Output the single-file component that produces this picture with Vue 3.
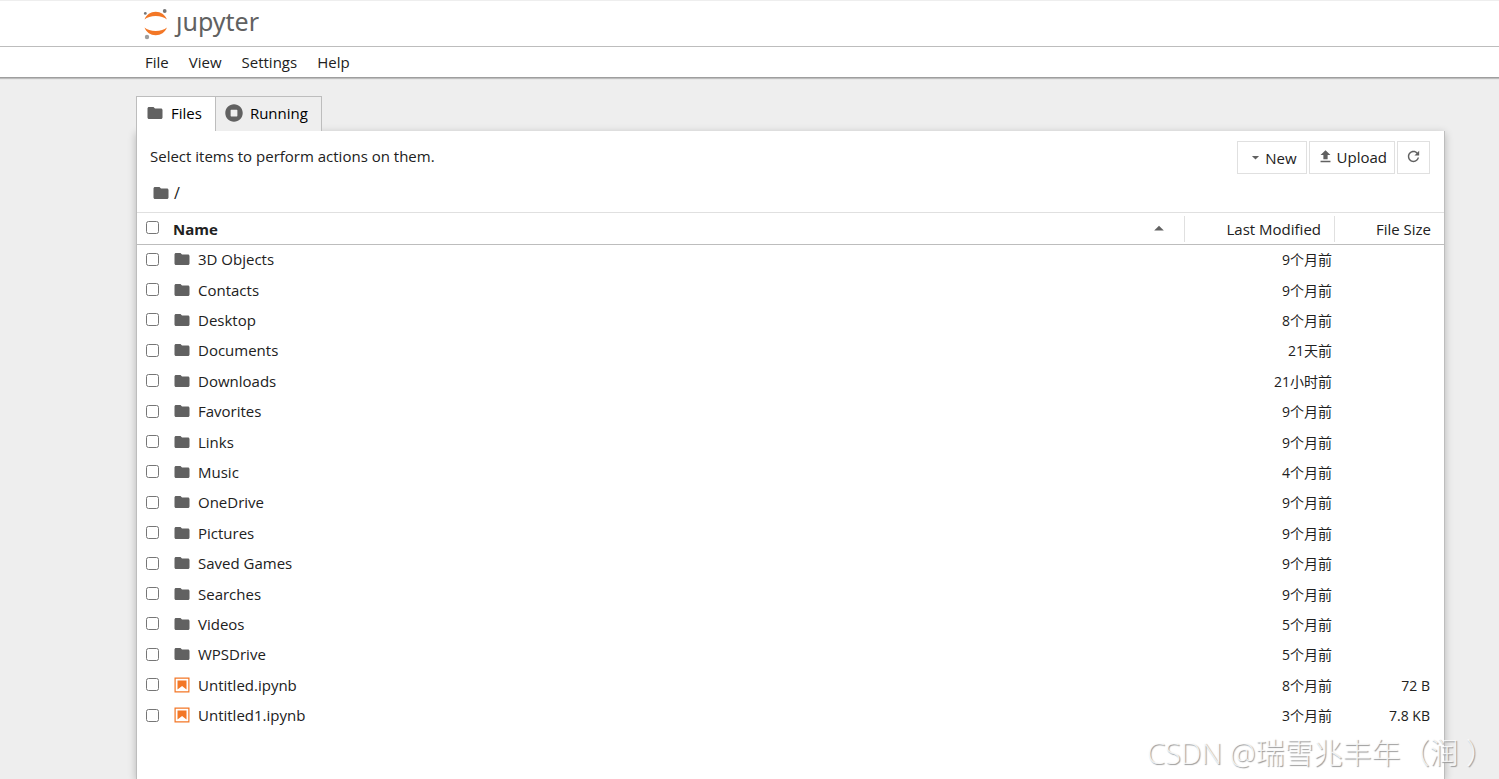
<script setup>
import { ref, computed } from 'vue'

const menus = ['File', 'View', 'Settings', 'Help']

const items = [
  { name: '3D Objects', modified: '9个月前' },
  { name: 'Contacts', modified: '9个月前' },
  { name: 'Desktop', modified: '8个月前' },
  { name: 'Documents', modified: '21天前' },
  { name: 'Downloads', modified: '21小时前' },
  { name: 'Favorites', modified: '9个月前' },
  { name: 'Links', modified: '9个月前' },
  { name: 'Music', modified: '4个月前' },
  { name: 'OneDrive', modified: '9个月前' },
  { name: 'Pictures', modified: '9个月前' },
  { name: 'Saved Games', modified: '9个月前' },
  { name: 'Searches', modified: '9个月前' },
  { name: 'Videos', modified: '5个月前' },
  { name: 'WPSDrive', modified: '5个月前' },
  { name: 'Untitled.ipynb', modified: '8个月前', size: '72 B', notebook: true },
  { name: 'Untitled1.ipynb', modified: '3个月前', size: '7.8 KB', notebook: true },
]

const tab = ref('files')
const selected = ref([])
const allSelected = computed({
  get: () => selected.value.length === items.length,
  set: (on) => { selected.value = on ? items.map((i) => i.name) : [] },
})
</script>

<template>
  <div class="page">
    <header class="top">
      <a class="logo" href="#" aria-label="jupyter">
        <svg class="logo-mark" viewBox="0 0 26 32" aria-hidden="true">
          <path d="M1.500 11.500C3.300 6.700 7.600 3.800 12.700 3.800S22.100 6.700 23.900 11.500C21.400 9.200 17.300 8 12.700 8S4 9.200 1.500 11.500Z" fill="#f37726" />
          <path d="M1.500 19.500C3.300 24.300 7.600 27.200 12.700 27.200S22.100 24.300 23.900 19.500C21.400 21.800 17.300 23 12.700 23S4 21.800 1.500 19.500Z" fill="#f37726" />
          <circle cx="21.700" cy="3" r="1.900" fill="#767677" />
          <circle cx="2.300" cy="5.400" r="1.400" fill="#767677" />
          <circle cx="4" cy="29" r="2.200" fill="#9e9e9e" />
        </svg>
        <span class="logo-text">ȷupyter</span>
      </a>
    </header>

    <nav class="menubar">
      <button v-for="m in menus" :key="m" class="menu" type="button">{{ m }}</button>
    </nav>

    <main class="main">
      <div class="tabs" role="tablist">
        <button class="tab" :class="{ current: tab === 'files' }" type="button" role="tab" :aria-selected="tab === 'files'" @click="tab = 'files'">
          <svg class="icon" viewBox="0 0 24 24"><path d="M10 4H4c-1.100 0-1.990.9-1.990 2L2 18c0 1.100.9 2 2 2h16c1.100 0 2-.9 2-2V8c0-1.100-.9-2-2-2h-8l-2-2z" /></svg>
          Files
        </button>
        <button class="tab" :class="{ current: tab === 'running' }" type="button" role="tab" :aria-selected="tab === 'running'" @click="tab = 'running'">
          <svg class="icon" viewBox="0 0 512 512"><path d="M256 8C119 8 8 119 8 256s111 248 248 248 248-111 248-248S393 8 256 8zm96 328c0 8.800-7.200 16-16 16H176c-8.800 0-16-7.200-16-16V176c0-8.800 7.200-16 16-16h160c8.800 0 16 7.200 16 16v160z" /></svg>
          Running
        </button>
      </div>

      <section class="panel">
        <div class="toolbar">
          <span class="hint">Select items to perform actions on them.</span>
          <button class="tool new" type="button">
            <svg class="icon" viewBox="0 0 18 18"><path d="M5.200 7.400L9 11.200l3.800-3.800z" /></svg>
            New
          </button>
          <button class="tool" type="button">
            <svg class="icon" viewBox="0 0 24 24"><path d="M9 16h6v-6h4l-7-7-7 7h4zm-4 2h14v2H5z" /></svg>
            Upload
          </button>
          <button class="tool" type="button" aria-label="Refresh">
            <svg class="icon" viewBox="0 0 18 18"><path d="M9 13.500c-2.490 0-4.500-2.010-4.500-4.500S6.510 4.500 9 4.500c1.240 0 2.360.52 3.170 1.330L10 8h5V3l-1.760 1.760C12.150 3.680 10.660 3 9 3 5.690 3 3.010 5.690 3.010 9S5.690 15 9 15c2.970 0 5.430-2.160 5.900-5h-1.520c-.46 2-2.240 3.500-4.380 3.500z" /></svg>
          </button>
        </div>

        <div class="crumbs">
          <svg class="icon" viewBox="0 0 24 24"><path d="M10 4H4c-1.100 0-1.990.9-1.990 2L2 18c0 1.100.9 2 2 2h16c1.100 0 2-.9 2-2V8c0-1.100-.9-2-2-2h-8l-2-2z" /></svg>
          <a href="#">/</a>
        </div>

        <table class="listing">
          <colgroup>
            <col class="col-check" />
            <col />
            <col class="col-modified" />
            <col class="col-size" />
          </colgroup>
          <thead>
            <tr>
              <th><input v-model="allSelected" class="check" type="checkbox" aria-label="Select all" /></th>
              <th class="name-head">
                <div class="head-cell">
                  Name
                  <svg class="icon" viewBox="0 0 18 18"><path d="M4.200 10.500L9 5.700l4.800 4.800z" /></svg>
                </div>
              </th>
              <th><div class="head-cell divided">Last Modified</div></th>
              <th><div class="head-cell divided">File Size</div></th>
            </tr>
          </thead>
          <tbody>
            <tr v-for="item in items" :key="item.name">
              <td><input v-model="selected" class="check" type="checkbox" :value="item.name" :aria-label="item.name" /></td>
              <td>
                <div class="item">
                  <svg v-if="item.notebook" class="icon notebook" viewBox="0 0 22 22"><path d="M18.700 3.300v15.400H3.300V3.300h15.400m1.500-1.500H1.800v18.300h18.300l.1-18.300z" /><path d="M16.500 16.500l-5.400-4.300-5.600 4.300v-11h11z" /></svg>
                  <svg v-else class="icon" viewBox="0 0 24 24"><path d="M10 4H4c-1.100 0-1.990.9-1.990 2L2 18c0 1.100.9 2 2 2h16c1.100 0 2-.9 2-2V8c0-1.100-.9-2-2-2h-8l-2-2z" /></svg>
                  {{ item.name }}
                </div>
              </td>
              <td class="modified">{{ item.modified }}</td>
              <td class="size">{{ item.size }}</td>
            </tr>
          </tbody>
        </table>
      </section>
    </main>

    <div class="watermark">CSDN @瑞雪兆丰年（润 ）</div>
  </div>
</template>

<style>
body {
  background: #eee;
}
</style>

<style scoped>
.page {
  position: relative;
  display: flex;
  flex-direction: column;
  min-height: 100vh;
  overflow: hidden;
  font-family: 'Open Sans', 'Noto Sans CJK SC', sans-serif;
  font-size: 15px;
  line-height: 20px;
  color: #212121;
}
button {
  font: inherit;
  color: inherit;
  cursor: pointer;
}
.icon {
  flex: none;
  width: 18px;
  height: 18px;
  fill: #616161;
}

.top {
  display: flex;
  box-sizing: border-box;
  height: 47px;
  padding: 0 143px;
  border-top: 1px solid #eee;
  border-bottom: 1px solid #bdbdbd;
  background: #fff;
}
.logo {
  display: flex;
  align-items: center;
  gap: 7px;
  color: #616161;
  text-decoration: none;
}
.logo-mark {
  width: 26px;
  height: 32px;
}
.logo-text {
  padding-bottom: 6px;
  font-family: 'Noto Sans', sans-serif;
  font-size: 25px;
  line-height: 32px;
}

.menubar {
  position: relative;
  display: flex;
  height: 30px;
  padding: 0 135px;
  border-bottom: 1px solid #9e9e9e;
  background: #fff;
  box-shadow: 0 1px 1px #bdbdbd;
}
.menu {
  padding: 0 10px;
  border: 0;
  background: none;
}

.main {
  flex: 1;
  display: flex;
  flex-direction: column;
  margin: 18px 54px 0 136px;
}
.tabs {
  position: relative;
  z-index: 1;
  display: flex;
}
.tab {
  display: flex;
  align-items: center;
  gap: 7px;
  height: 35px;
  padding: 0 13px 2px 9px;
  border: 1px solid #bdbdbd;
  border-bottom: 0;
  background: #eee;
  color: #000;
}
.tab + .tab {
  margin-left: -1px;
}
.tab.current {
  background: #fff;
}

.panel {
  flex: 1;
  padding-top: 10px;
  border-left: 1px solid #bdbdbd;
  border-right: 1px solid #bdbdbd;
  background: #fff;
  box-shadow: 0 2px 8px rgba(0, 0, 0, 0.24);
}
.toolbar {
  display: flex;
  gap: 2px;
  padding: 0 14px 0 13px;
}
.hint {
  flex: 1;
  line-height: 30px;
}
.tool {
  display: flex;
  align-items: center;
  gap: 3px;
  height: 33px;
  padding: 0 7px 2px;
  border: 1px solid #e0e0e0;
  background: #fff;
}
.tool .icon {
  width: 17px;
  height: 17px;
}
.tool.new {
  gap: 1px;
  padding: 0 9px;
}
.crumbs {
  display: flex;
  align-items: center;
  gap: 4px;
  height: 38px;
  padding: 0 15px;
  font-size: 16px;
}
.crumbs a {
  color: inherit;
  text-decoration: none;
}

.listing {
  width: 100%;
  border-collapse: collapse;
  table-layout: fixed;
}
.col-check {
  width: 36px;
}
.col-modified {
  width: 150px;
}
.col-size {
  width: 110px;
}
.listing th,
.listing td {
  padding: 0;
}
.listing thead tr {
  height: 32px;
  border-top: 1px solid #e0e0e0;
  border-bottom: 1px solid #bdbdbd;
}
.head-cell {
  display: flex;
  justify-content: flex-end;
  height: 26px;
  padding-right: 13px;
  font-weight: 400;
  line-height: 26px;
}
.name-head .head-cell {
  justify-content: space-between;
  padding-right: 16px;
  font-weight: 700;
}
.head-cell .icon {
  margin-top: 4px;
}
.divided {
  border-left: 1px solid #e0e0e0;
}
/* rows average a little over 30px */
.listing tbody tr {
  height: 30px;
}
.listing tbody tr:nth-child(5n + 1),
.listing tbody tr:nth-child(5n + 4) {
  height: 31px;
}
.check {
  display: block;
  width: 13px;
  height: 13px;
  margin: 0 0 2px 9px;
}
.item {
  display: flex;
  align-items: center;
  gap: 7px;
  padding-bottom: 2px;
}
.notebook {
  fill: #f37726;
}
.modified,
.size {
  font-size: 14px;
  text-align: right;
}
.listing .modified {
  padding-right: 2px;
}
.listing .size {
  padding-right: 14px;
}

.watermark {
  position: absolute;
  right: 4px;
  bottom: 8px;
  font-size: 29px;
  font-weight: 300;
  line-height: 36px;
  color: rgba(255, 255, 255, 0.8);
  text-shadow: 1px 1px 1px #999;
  white-space: nowrap;
  pointer-events: none;
}
</style>
